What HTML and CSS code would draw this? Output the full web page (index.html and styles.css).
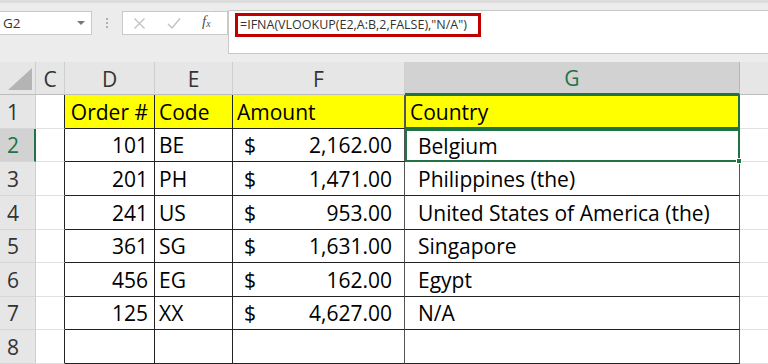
FILE: index.html
```html
<!DOCTYPE html>
<html>
<head>
<meta charset="utf-8">
<link rel="stylesheet" href="styles.css">
</head>
<body>
<div class="toolbar">
  <div class="namebox"><span class="nb-text">G2</span><span class="nb-arrow"></span></div>
  <div class="dots"><i></i><i></i><i></i></div>
  <div class="btnbox">
    <svg class="ico" width="13" height="13" viewBox="0 0 13 13"><path d="M1.5 1.5 L11.5 11.5 M11.5 1.5 L1.5 11.5" stroke="#c2c2c2" stroke-width="1.4" fill="none"/></svg>
    <svg class="ico" width="14" height="13" viewBox="0 0 14 13"><path d="M1 7 L5 11 L13 1.5" stroke="#c2c2c2" stroke-width="1.4" fill="none"/></svg>
    <span class="fx">f<sub>x</sub></span>
  </div>
  <div class="fbar">
    <div class="formula">=IFNA(VLOOKUP(E2,A:B,2,FALSE),"N/A")</div>
  </div>
</div>
<div class="sheet">
  <div class="corner"><span class="tri"></span></div>
  <div class="ch">C</div>
  <div class="ch">D</div>
  <div class="ch">E</div>
  <div class="ch">F</div>
  <div class="ch sel">G</div>
  <div class="ch last"></div>

  <div class="rh">1</div>
  <div class="c"></div>
  <div class="t d y">Order #</div>
  <div class="t e y">Code</div>
  <div class="t f y hd">Amount</div>
  <div class="t g y hd g1">Country</div>
  <div class="h"></div>

  <div class="rh sel">2</div>
  <div class="c"></div>
  <div class="t d">101</div>
  <div class="t e">BE</div>
  <div class="t f"><span>$</span><span>2,162.00</span></div>
  <div class="t g active">Belgium<span class="handle"></span></div>
  <div class="h"></div>

  <div class="rh">3</div>
  <div class="c"></div>
  <div class="t d">201</div>
  <div class="t e">PH</div>
  <div class="t f"><span>$</span><span>1,471.00</span></div>
  <div class="t g">Philippines (the)</div>
  <div class="h"></div>

  <div class="rh">4</div>
  <div class="c"></div>
  <div class="t d">241</div>
  <div class="t e">US</div>
  <div class="t f"><span>$</span><span>953.00</span></div>
  <div class="t g">United States of America (the)</div>
  <div class="h"></div>

  <div class="rh">5</div>
  <div class="c"></div>
  <div class="t d">361</div>
  <div class="t e">SG</div>
  <div class="t f"><span>$</span><span>1,631.00</span></div>
  <div class="t g">Singapore</div>
  <div class="h"></div>

  <div class="rh">6</div>
  <div class="c"></div>
  <div class="t d">456</div>
  <div class="t e">EG</div>
  <div class="t f"><span>$</span><span>162.00</span></div>
  <div class="t g">Egypt</div>
  <div class="h"></div>

  <div class="rh">7</div>
  <div class="c"></div>
  <div class="t d">125</div>
  <div class="t e">XX</div>
  <div class="t f"><span>$</span><span>4,627.00</span></div>
  <div class="t g">N/A</div>
  <div class="h"></div>

  <div class="rh">8</div>
  <div class="c"></div>
  <div class="t d"></div>
  <div class="t e"></div>
  <div class="t f"></div>
  <div class="t g"></div>
  <div class="h"></div>
</div>
</body>
</html>
```
FILE: styles.css
```css
* { box-sizing: border-box; }
html, body { margin: 0; padding: 0; }
body {
  width: 768px;
  height: 364px;
  overflow: hidden;
  background: #ffffff;
  font-family: "Open Sans", "Liberation Sans", sans-serif;
}
.toolbar {
  height: 62px;
  background: #ececec;
  border-top: 3px solid #dcdcdc;
  display: flex;
  align-items: flex-start;
  padding-top: 7px;
}
.namebox {
  margin-top: 1px;
  width: 92px;
  height: 24px;
  background: #fff;
  border: 1px solid #c9c9c9;
  border-left: none;
  display: flex;
  align-items: center;
  justify-content: space-between;
  padding: 0 6px 0 3px;
}
.nb-text { font-size: 13.5px; color: #333; }
.nb-arrow {
  width: 0; height: 0;
  border-left: 4px solid transparent;
  border-right: 4px solid transparent;
  border-top: 4px solid #777;
}
.dots {
  width: 30px;
  height: 24px;
  margin-top: 1px;
  display: flex;
  flex-direction: column;
  align-items: center;
  justify-content: center;
  gap: 2px;
}
.dots i { display: block; width: 2px; height: 2px; background: #b0b0b0; }
.btnbox {
  margin-top: 1px;
  width: 106px;
  height: 24px;
  background: #fff;
  border: 1px solid #c9c9c9;
  display: flex;
  align-items: center;
  gap: 21px;
  padding: 0 0 0 10px;
}
.fx {
  font-family: "Liberation Serif", serif;
  font-style: italic;
  font-size: 15px;
  color: #555;
  margin-top: -3px;
}
.fx sub { font-size: 10px; vertical-align: -1px; }
.fbar {
  flex: 1;
  height: 44px;
  background: #fff;
  border: 1px solid #c9c9c9;
  border-right: none;
  padding: 2px 0 0 6px;
}
.formula {
  display: inline-block;
  border: 3px solid #c00000;
  height: 24px;
  width: 246px;
  padding: 0 0 0 2px;
  font-size: 12.5px;
  line-height: 18px;
  color: #333;
  white-space: nowrap;
  overflow: hidden;
}
.sheet {
  display: grid;
  grid-template-columns: 36px 29px 90px 78px 172px 335px 28px;
  grid-template-rows: 33px 34px 33px 34px 34px 33px 34px 33px 34px;
  font-size: 21px;
  color: #000;
}
.sheet > div { display: flex; align-items: center; white-space: nowrap; }
.corner {
  background: #e6e6e6;
  border-right: 1px solid #cfcfcf;
  border-bottom: 1px solid #bdbdbd;
  position: relative;
}
.tri {
  position: absolute;
  right: 3px;
  bottom: 4px;
  width: 0; height: 0;
  border-left: 24px solid transparent;
  border-bottom: 22px solid #b4b4b4;
}
.ch {
  background: #e6e6e6;
  border-right: 1px solid #cfcfcf;
  border-bottom: 1px solid #bdbdbd;
  justify-content: center;
  color: #333;
  padding-top: 1px;
}
.ch.sel {
  background: #d2d2d2;
  color: #217346;
  border-bottom: 2px solid #217346;
  border-right: 1px solid #b8b8b8;
}
.ch.last { border-right: none; }
.rh {
  background: #e6e6e6;
  border-right: 1px solid #cfcfcf;
  border-bottom: 1px solid #d6d6d6;
  padding-left: 7px;
  color: #333;
}
.rh.sel {
  background: #d2d2d2;
  color: #217346;
  border-right: 2px solid #217346;
}
.c {
  border-right: 1px solid #222;
  border-bottom: 1px solid #e1e1e1;
}
.h {
  border-bottom: 1px solid #e1e1e1;
}
.t {
  border-right: 1px solid #222;
  border-bottom: 1px solid #222;
}
.f, .g { border-right-color: #555; }
.y { background: #ffff00; }
.d { justify-content: flex-end; padding-right: 6px; }
.e { padding-left: 4px; }
.hd { padding-left: 4px; }
.f:not(.hd) { justify-content: space-between; padding: 0 12px 0 11px; }
.g { padding-left: 13px; }
.g.hd { padding-left: 5px; }
.g1 { box-shadow: inset 0 0 0 1px #217346; border-bottom-color: #217346; }
.active {
  position: relative;
  border: 2px solid #217346;
  padding-left: 11px;
}
.handle {
  position: absolute;
  right: -4px;
  bottom: -4px;
  width: 6px;
  height: 6px;
  background: #217346;
  border: 1px solid #fff;
}
```
